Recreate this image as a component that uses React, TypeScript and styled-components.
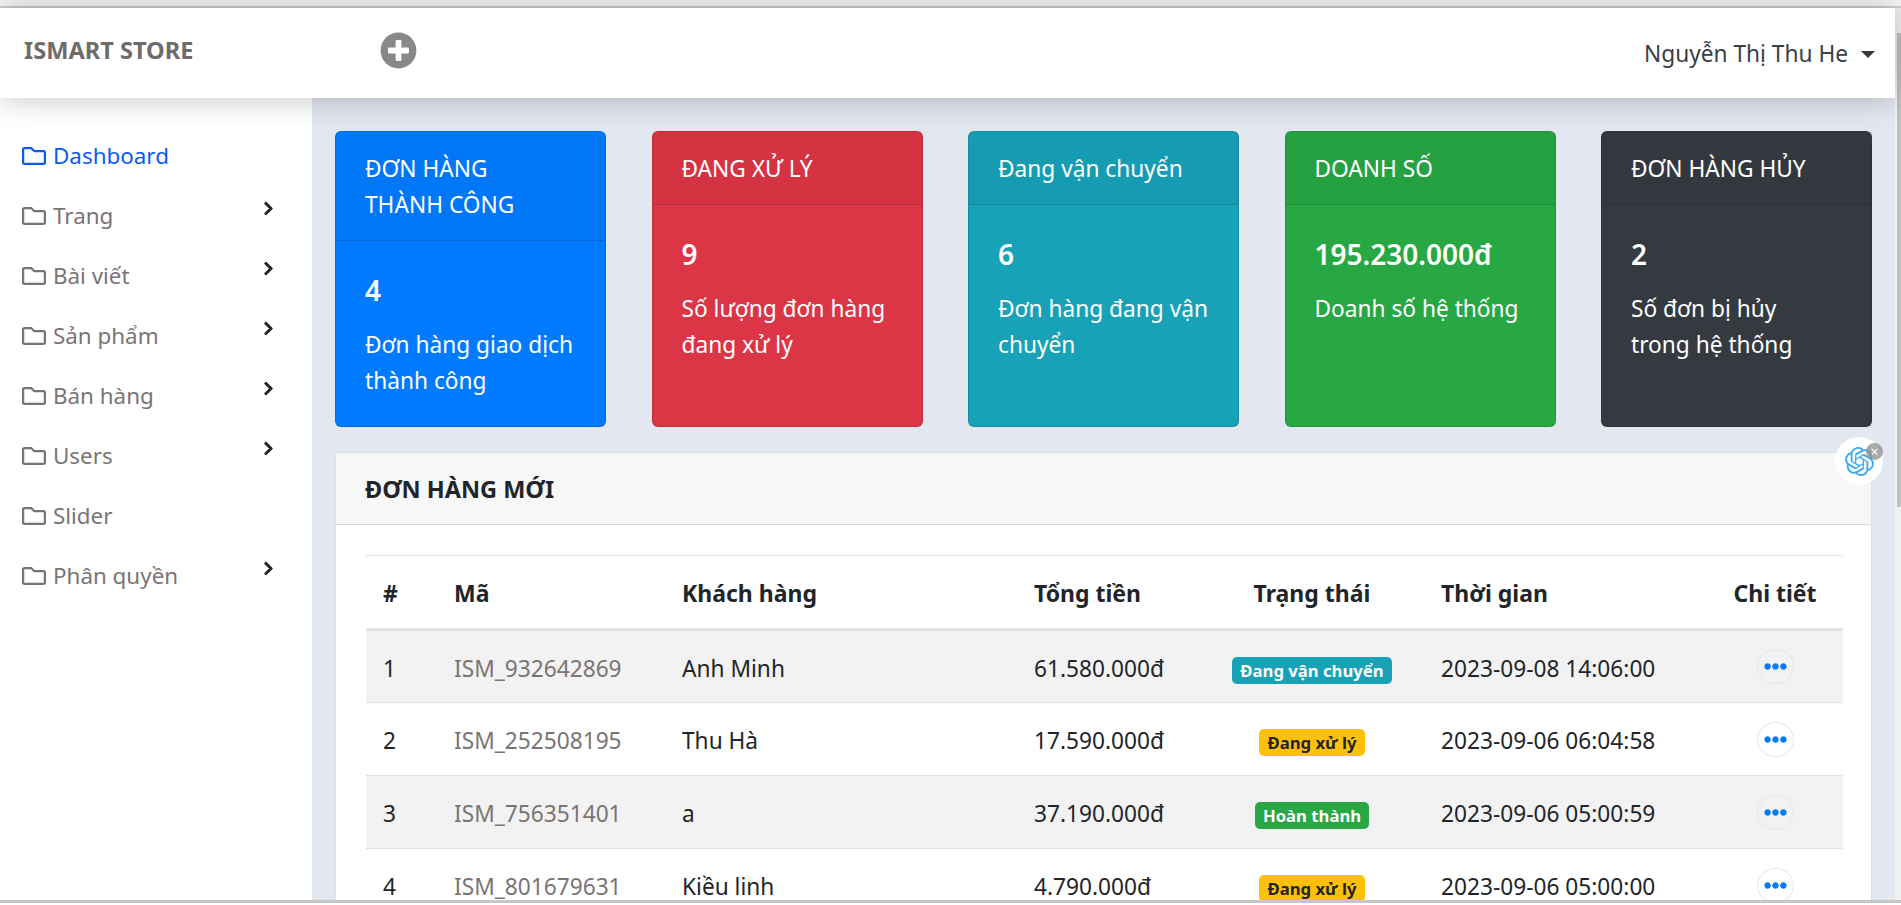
import React from "react";
import styled, { createGlobalStyle } from "styled-components";
import {
  FaRegFolder,
  FaChevronRight,
  FaPlusCircle,
  FaEllipsisH,
} from "react-icons/fa";
import { SiOpenai } from "react-icons/si";

const GlobalStyle = createGlobalStyle`
  * { box-sizing: border-box; }
  html, body { margin: 0; padding: 0; height: 100%; overflow: hidden; background: #fff; }
  body {
    font-family: "Noto Sans", "Open Sans", "Liberation Sans", sans-serif;
    font-size: 22.7px;
    line-height: 36px;
    color: #212529;
  }
`;

const Frame = styled.div`
  position: relative;
  display: flex;
  flex-direction: column;
  height: 905px;
  overflow: hidden;
`;
const TopStrip = styled.div`
  flex: none;
  height: 8px;
  background: #f6f6f6;
  border-bottom: 2px solid #cfcfcf;
`;
const BottomStrip = styled.div`
  flex: none;
  height: 5px;
  background: #fff;
  border-top: 3px solid #c6c6c6;
`;
const Viewport = styled.div`
  flex: 1;
  min-height: 0;
  display: flex;
`;
const Page = styled.div`
  flex: 1;
  min-width: 0;
  display: flex;
  flex-direction: column;
`;
const Track = styled.div`
  flex: none;
  width: 6px;
  padding: 25px 0 0 2px;
  background: #f1f1f1;
`;
const Thumb = styled.div`
  height: 474px;
  background: #c1c1c1;
`;

const Header = styled.header`
  position: relative;
  z-index: 2;
  flex: none;
  height: 90px;
  display: flex;
  align-items: center;
  padding: 0 20px 6px 24px;
  background: #fff;
  box-shadow: 0 0 30px rgba(0, 0, 0, 0.25);
`;
const Logo = styled.div`
  width: 356px;
  font-size: 23.6px;
  font-weight: 700;
  color: #6f6b6b;
`;
const AddIcon = styled(FaPlusCircle)`
  font-size: 37px;
  color: #888;
`;
const UserMenu = styled.div`
  margin-left: auto;
  display: flex;
  align-items: center;
  gap: 13px;
  padding-top: 8px;
  font-size: 22.7px;
  color: #3a4046;
`;
const Caret = styled.span`
  width: 0;
  height: 0;
  border-top: 7px solid #343a40;
  border-left: 7px solid transparent;
  border-right: 7px solid transparent;
`;

const Body = styled.div`
  flex: 1;
  min-height: 0;
  display: flex;
`;
const Sidebar = styled.nav`
  flex: none;
  width: 312px;
  padding: 28px 36px 0 22px;
  background: #fff;
`;
const MenuItem = styled.div<{ $active?: boolean }>`
  display: flex;
  align-items: center;
  height: 60px;
  font-size: 22.4px;
  color: ${(p) => (p.$active ? "#0d5cf0" : "#7a7474")};
`;
const FolderIcon = styled(FaRegFolder)`
  flex: none;
  font-size: 24px;
  margin-right: 7px;
`;
const Arrow = styled(FaChevronRight)`
  margin: -16px 0 0 auto;
  font-size: 15px;
  color: #212529;
  stroke: currentColor;
  stroke-width: 30px;
`;

const Main = styled.main`
  flex: 1;
  min-width: 0;
  padding: 33px 23px 0 23px;
  background: #e2e7f0;
  overflow: hidden;
`;
const StatRow = styled.div`
  display: flex;
  justify-content: space-between;
  align-items: stretch;
`;
const StatCard = styled.section<{ $bg: string }>`
  width: 271px;
  color: #fff;
  background: ${(p) => p.$bg};
  border: 1px solid rgba(0, 0, 0, 0.125);
  border-radius: 6px;
`;
const StatHead = styled.div`
  padding: 19px 29px 17px;
  white-space: pre-line;
  background: rgba(0, 0, 0, 0.03);
  border-bottom: 1px solid rgba(0, 0, 0, 0.125);
`;
const StatBody = styled.div`
  padding: 29px 29px 27px;
  white-space: pre-line;
`;
const StatValue = styled.div`
  font-size: 28px;
  font-weight: 600;
  line-height: 41px;
  margin-bottom: 16px;
`;

const OrdersCard = styled.section`
  margin-top: 25px;
  background: #fff;
  border: 1px solid rgba(0, 0, 0, 0.125);
  border-radius: 6px 6px 0 0;
`;
const OrdersHead = styled.div`
  height: 72px;
  padding: 18px 29px;
  font-size: 23.5px;
  font-weight: 700;
  color: #212529;
  background: #f7f7f7;
  border-bottom: 1px solid rgba(0, 0, 0, 0.125);
`;
const OrdersBody = styled.div`
  padding: 30px 29px 0 30px;
`;
const Table = styled.table`
  width: 100%;
  table-layout: fixed;
  border-collapse: collapse;
`;
const Th = styled.th<{ $center?: boolean }>`
  height: 74px;
  padding: 2px 17px 0;
  font-size: 23px;
  font-weight: 700;
  white-space: nowrap;
  text-align: ${(p) => (p.$center ? "center" : "left")};
  border-top: 1px solid #dee2e6;
  border-bottom: 3px solid #dee2e6;
`;
const Row = styled.tr<{ $striped: boolean }>`
  background: ${(p) => (p.$striped ? "#f2f2f2" : "transparent")};
`;
const Td = styled.td<{ $center?: boolean; $muted?: boolean }>`
  height: 73px;
  padding: 4px 17px 0;
  white-space: nowrap;
  text-align: ${(p) => (p.$center ? "center" : "left")};
  color: ${(p) => (p.$muted ? "#7a7474" : "#212529")};
  border-bottom: 1px solid #dee2e6;
`;
const Badge = styled.span<{ $bg: string; $fg: string }>`
  display: inline-block;
  margin-bottom: 2px;
  padding: 0 8px;
  font-size: 16.7px;
  font-weight: 700;
  line-height: 27px;
  white-space: nowrap;
  border-radius: 5px;
  color: ${(p) => p.$fg};
  background: ${(p) => p.$bg};
`;
const DotsButton = styled.span`
  display: inline-flex;
  align-items: center;
  justify-content: center;
  width: 37px;
  height: 35px;
  margin-bottom: 4px;
  font-size: 23px;
  color: #007bff;
  background: transparent;
  border: 1px solid #e4e6ea;
  border-radius: 50%;
  vertical-align: middle;
`;

const Widget = styled.div`
  position: absolute;
  top: 437px;
  left: 1835px;
  z-index: 3;
  display: flex;
  align-items: center;
  justify-content: center;
  width: 48px;
  height: 48px;
  font-size: 29px;
  color: #41a9f2;
  background: #fff;
  border-radius: 50%;
`;
const WidgetClose = styled.span`
  position: absolute;
  top: 6px;
  right: 0;
  display: flex;
  align-items: center;
  justify-content: center;
  width: 17px;
  height: 17px;
  font-size: 14px;
  line-height: 1;
  color: #fff;
  background: rgba(140, 140, 140, 0.75);
  border-radius: 50%;
`;

const menu = [
  { label: "Dashboard", active: true },
  { label: "Trang", sub: true },
  { label: "Bài viết", sub: true },
  { label: "Sản phẩm", sub: true },
  { label: "Bán hàng", sub: true },
  { label: "Users", sub: true },
  { label: "Slider" },
  { label: "Phân quyền", sub: true },
];

const stats = [
  { head: "ĐƠN HÀNG\nTHÀNH CÔNG", value: "4", text: "Đơn hàng giao dịch\nthành công", bg: "#007bff" },
  { head: "ĐANG XỬ LÝ", value: "9", text: "Số lượng đơn hàng\nđang xử lý", bg: "#dc3545" },
  { head: "Đang vận chuyển", value: "6", text: "Đơn hàng đang vận\nchuyển", bg: "#17a2b8" },
  { head: "DOANH SỐ", value: "195.230.000đ", text: "Doanh số hệ thống", bg: "#28a745" },
  { head: "ĐƠN HÀNG HỦY", value: "2", text: "Số đơn bị hủy\ntrong hệ thống", bg: "#343a40" },
];

const statusColors: Record<string, { bg: string; fg: string }> = {
  "Đang vận chuyển": { bg: "#17a2b8", fg: "#fff" },
  "Đang xử lý": { bg: "#ffc107", fg: "#212529" },
  "Hoàn thành": { bg: "#28a745", fg: "#fff" },
};

const orders = [
  { code: "ISM_932642869", name: "Anh Minh", total: "61.580.000đ", status: "Đang vận chuyển", time: "2023-09-08 14:06:00" },
  { code: "ISM_252508195", name: "Thu Hà", total: "17.590.000đ", status: "Đang xử lý", time: "2023-09-06 06:04:58" },
  { code: "ISM_756351401", name: "a", total: "37.190.000đ", status: "Hoàn thành", time: "2023-09-06 05:00:59" },
  { code: "ISM_801679631", name: "Kiều linh", total: "4.790.000đ", status: "Đang xử lý", time: "2023-09-06 05:00:00" },
];

const App: React.FC = () => {
  return (
    <Frame>
      <GlobalStyle />
      <TopStrip />
      <Viewport>
        <Page>
          <Header>
            <Logo>ISMART STORE</Logo>
            <AddIcon />
            <UserMenu>
              Nguyễn Thị Thu He
              <Caret />
            </UserMenu>
          </Header>
          <Body>
            <Sidebar>
              {menu.map((item) => (
                <MenuItem key={item.label} $active={item.active}>
                  <FolderIcon />
                  {item.label}
                  {item.sub && <Arrow />}
                </MenuItem>
              ))}
            </Sidebar>
            <Main>
              <StatRow>
                {stats.map((s) => (
                  <StatCard key={s.head} $bg={s.bg}>
                    <StatHead>{s.head}</StatHead>
                    <StatBody>
                      <StatValue>{s.value}</StatValue>
                      {s.text}
                    </StatBody>
                  </StatCard>
                ))}
              </StatRow>
              <OrdersCard>
                <OrdersHead>ĐƠN HÀNG MỚI</OrdersHead>
                <OrdersBody>
                  <Table>
                    <colgroup>
                      <col style={{ width: 71 }} />
                      <col style={{ width: 228 }} />
                      <col style={{ width: 352 }} />
                      <col style={{ width: 183 }} />
                      <col style={{ width: 224 }} />
                      <col style={{ width: 283 }} />
                      <col style={{ width: 136 }} />
                    </colgroup>
                    <thead>
                      <tr>
                        <Th>#</Th>
                        <Th>Mã</Th>
                        <Th>Khách hàng</Th>
                        <Th>Tổng tiền</Th>
                        <Th $center>Trạng thái</Th>
                        <Th>Thời gian</Th>
                        <Th $center>Chi tiết</Th>
                      </tr>
                    </thead>
                    <tbody>
                      {orders.map((o, i) => (
                        <Row key={o.code} $striped={i % 2 === 0}>
                          <Td>{i + 1}</Td>
                          <Td $muted>{o.code}</Td>
                          <Td>{o.name}</Td>
                          <Td>{o.total}</Td>
                          <Td $center>
                            <Badge $bg={statusColors[o.status].bg} $fg={statusColors[o.status].fg}>
                              {o.status}
                            </Badge>
                          </Td>
                          <Td>{o.time}</Td>
                          <Td $center>
                            <DotsButton>
                              <FaEllipsisH />
                            </DotsButton>
                          </Td>
                        </Row>
                      ))}
                    </tbody>
                  </Table>
                </OrdersBody>
              </OrdersCard>
            </Main>
          </Body>
        </Page>
        <Track>
          <Thumb />
        </Track>
      </Viewport>
      <BottomStrip />
      <Widget>
        <SiOpenai />
        <WidgetClose>×</WidgetClose>
      </Widget>
    </Frame>
  );
};

export default App;
